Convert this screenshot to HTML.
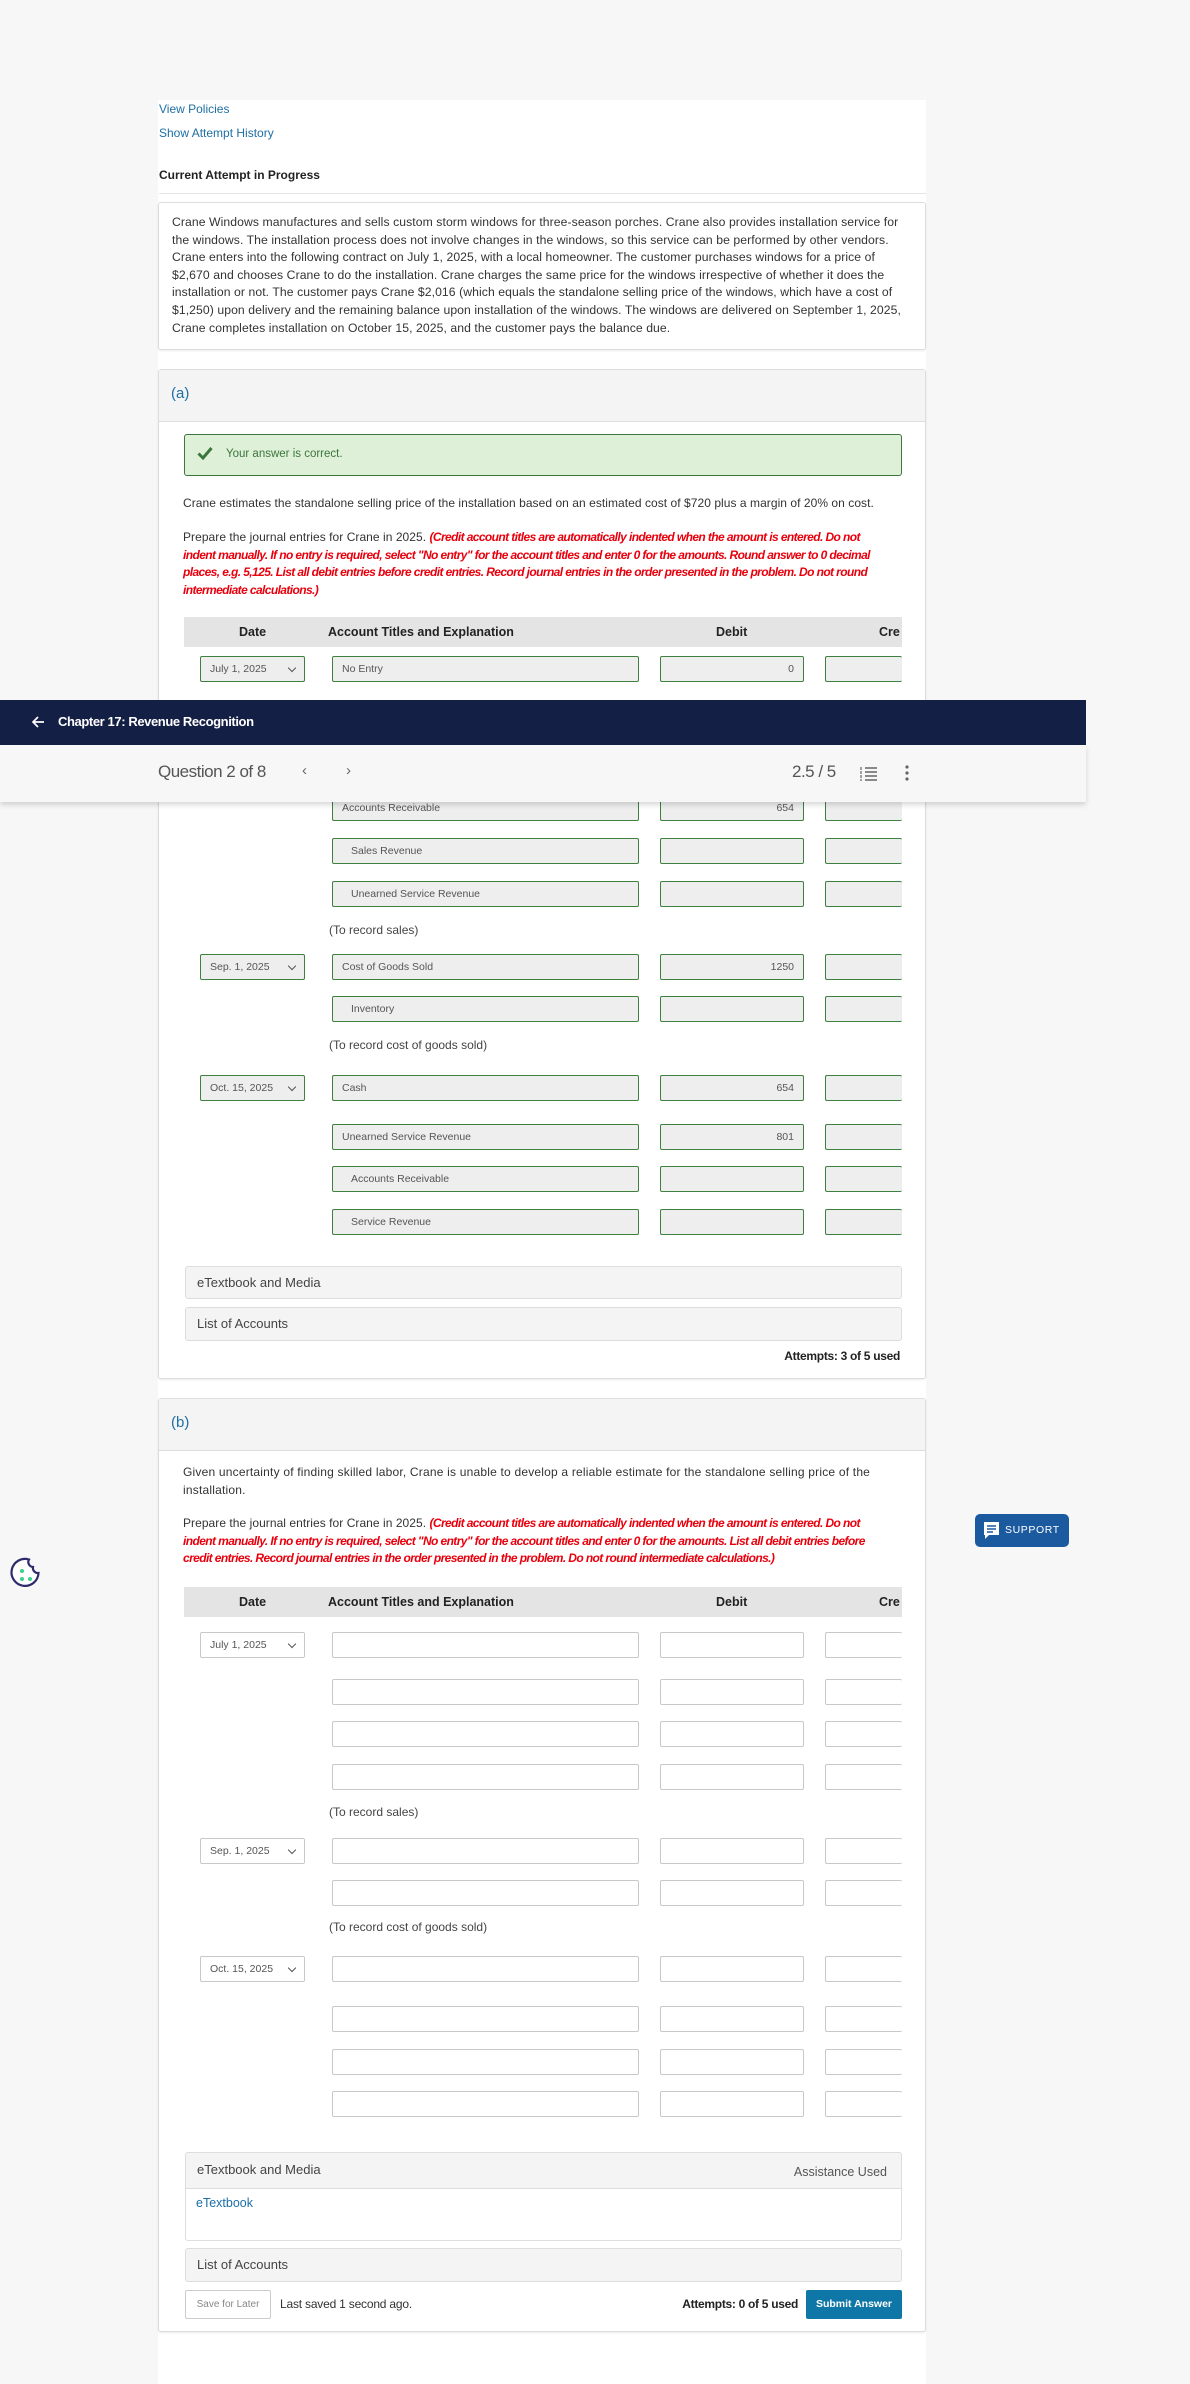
<!DOCTYPE html>
<html><head><meta charset="utf-8">
<style>
*{box-sizing:border-box;margin:0;padding:0}
body{width:1190px;height:2384px;background:#f7f7f7;font-family:"Liberation Sans",sans-serif;color:#333;position:relative;overflow:hidden}
.a{position:absolute}
.col{position:absolute;left:158px;top:100px;width:768px;height:2284px;background:#fff}
.link{color:#1d6fa5;font-size:12px}
.sec{position:absolute;left:158px;width:768px;border:1px solid #ddd;border-radius:3px;background:#fff;box-shadow:0 1px 2px rgba(0,0,0,.08)}
.sech{position:absolute;left:0;right:0;top:0;background:#f4f4f4;border-bottom:1px solid #ddd}
.t{font-size:12px;line-height:17.6px;white-space:nowrap}
.red{color:#e8000d;font-style:italic;font-weight:bold;letter-spacing:-.6px}
.th{position:absolute;left:184px;width:718px;height:30px;background:#e4e4e4;font-weight:bold;font-size:12.5px;color:#222}
.th span{position:absolute;top:8px}
.in{position:absolute;height:26px;font-size:10.5px;color:#555;line-height:24px;padding:0 9px;white-space:nowrap;overflow:hidden}
.g{background:#eeeeee;border:1.5px solid #3f7f3f;border-radius:2px}
.w{background:#fff;border:1px solid #c8c8c8;border-radius:2px}
.sel::after{content:"";position:absolute;right:9px;top:8px;width:5px;height:5px;border-right:1.7px solid #555;border-bottom:1.7px solid #555;transform:rotate(45deg)}
.acc{left:332px;width:307px}.deb{left:660px;width:144px;text-align:right}.cre{left:825px;width:77px;border-right:none}
.dat{left:200px;width:105px}
.note{position:absolute;left:329px;font-size:12px;color:#444}
.box{position:absolute;left:185px;width:717px;background:#f4f4f4;border:1px solid #ddd;border-radius:3px;font-size:13px;color:#444;padding-left:11px}
</style></head><body>
<div class="col"></div>
<div class="a link" style="left:159px;top:102px">View Policies</div>
<div class="a link" style="left:159px;top:126px">Show Attempt History</div>
<div class="a" style="left:159px;top:168px;font-size:12px;font-weight:bold;color:#222">Current Attempt in Progress</div>
<div class="a" style="left:159px;top:193px;width:767px;height:1px;background:#e5e5e5"></div>

<div class="sec" style="top:202px;height:148px"></div>
<div class="a t" style="left:172px;top:214px;font-size:12.2px;letter-spacing:.08px;color:#333">
Crane Windows manufactures and sells custom storm windows for three-season porches. Crane also provides installation service for<br>
the windows. The installation process does not involve changes in the windows, so this service can be performed by other vendors.<br>
Crane enters into the following contract on July 1, 2025, with a local homeowner. The customer purchases windows for a price of<br>
$2,670 and chooses Crane to do the installation. Crane charges the same price for the windows irrespective of whether it does the<br>
installation or not. The customer pays Crane $2,016 (which equals the standalone selling price of the windows, which have a cost of<br>
$1,250) upon delivery and the remaining balance upon installation of the windows. The windows are delivered on September 1, 2025,<br>
Crane completes installation on October 15, 2025, and the customer pays the balance due.</div>

<!-- section a -->
<div class="sec" style="top:369px;height:1010px"><div class="sech" style="height:52px"></div></div>
<div class="a" style="left:171px;top:385px;font-size:15px;color:#1d6fa5">(a)</div>
<div class="a" style="left:184px;top:434px;width:718px;height:42px;background:#dff0d8;border:1.5px solid #3c763d;border-radius:3px"></div>
<svg class="a" style="left:197px;top:446px" width="16" height="14" viewBox="0 0 16 14"><path d="M1.5 7.5l4.5 4.5L14.5 2" stroke="#3c763d" stroke-width="3" fill="none"/></svg>
<div class="a" style="left:226px;top:448px;font-size:11.5px;color:#3c763d">Your answer is correct.</div>
<div class="a t" style="left:183px;top:495px;letter-spacing:.05px">Crane estimates the standalone selling price of the installation based on an estimated cost of $720 plus a margin of 20% on cost.</div>
<div class="a t" style="left:183px;top:529px;letter-spacing:.05px">Prepare the journal entries for Crane in 2025. <span class="red">(Credit account titles are automatically indented when the amount is entered. Do not</span><br>
<span class="red">indent manually. If no entry is required, select "No entry" for the account titles and enter 0 for the amounts. Round answer to 0 decimal</span><br>
<span class="red">places, e.g. 5,125. List all debit entries before credit entries. Record journal entries in the order presented in the problem. Do not round</span><br>
<span class="red">intermediate calculations.)</span></div>
<div class="th" style="top:617px"><span style="left:55px">Date</span><span style="left:144px">Account Titles and Explanation</span><span style="left:532px">Debit</span><span style="left:695px">Cre</span></div>

<div class="in g sel dat" style="top:656px">July 1, 2025</div>
<div class="in g acc" style="top:656px">No Entry</div>
<div class="in g deb" style="top:656px">0</div>
<div class="in g cre" style="top:656px"></div>

<div class="in g acc" style="top:795px">Accounts Receivable</div>
<div class="in g deb" style="top:795px">654</div>
<div class="in g cre" style="top:795px"></div>
<div class="in g acc" style="top:838px;padding-left:18px">Sales Revenue</div>
<div class="in g deb" style="top:838px"></div><div class="in g cre" style="top:838px"></div>
<div class="in g acc" style="top:881px;padding-left:18px">Unearned Service Revenue</div>
<div class="in g deb" style="top:881px"></div><div class="in g cre" style="top:881px"></div>
<div class="note" style="top:923px">(To record sales)</div>

<div class="in g sel dat" style="top:954px">Sep. 1, 2025</div>
<div class="in g acc" style="top:954px">Cost of Goods Sold</div>
<div class="in g deb" style="top:954px">1250</div><div class="in g cre" style="top:954px"></div>
<div class="in g acc" style="top:996px;padding-left:18px">Inventory</div>
<div class="in g deb" style="top:996px"></div><div class="in g cre" style="top:996px"></div>
<div class="note" style="top:1038px">(To record cost of goods sold)</div>

<div class="in g sel dat" style="top:1075px">Oct. 15, 2025</div>
<div class="in g acc" style="top:1075px">Cash</div>
<div class="in g deb" style="top:1075px">654</div><div class="in g cre" style="top:1075px"></div>
<div class="in g acc" style="top:1124px">Unearned Service Revenue</div>
<div class="in g deb" style="top:1124px">801</div><div class="in g cre" style="top:1124px"></div>
<div class="in g acc" style="top:1166px;padding-left:18px">Accounts Receivable</div>
<div class="in g deb" style="top:1166px"></div><div class="in g cre" style="top:1166px"></div>
<div class="in g acc" style="top:1209px;padding-left:18px">Service Revenue</div>
<div class="in g deb" style="top:1209px"></div><div class="in g cre" style="top:1209px"></div>

<div class="box" style="top:1266px;height:33px;line-height:31px">eTextbook and Media</div>
<div class="box" style="top:1307px;height:34px;line-height:32px">List of Accounts</div>
<div class="a" style="left:700px;width:200px;text-align:right;top:1349px;font-size:12px;font-weight:bold;color:#222;letter-spacing:-.3px">Attempts: 3 of 5 used</div>

<!-- section b -->
<div class="sec" style="top:1398px;height:934px"><div class="sech" style="height:52px"></div></div>
<div class="a" style="left:171px;top:1414px;font-size:15px;color:#1d6fa5">(b)</div>
<div class="a t" style="left:183px;top:1464px;letter-spacing:.2px">Given uncertainty of finding skilled labor, Crane is unable to develop a reliable estimate for the standalone selling price of the<br>installation.</div>
<div class="a t" style="left:183px;top:1515px;letter-spacing:.05px">Prepare the journal entries for Crane in 2025. <span class="red">(Credit account titles are automatically indented when the amount is entered. Do not</span><br>
<span class="red">indent manually. If no entry is required, select "No entry" for the account titles and enter 0 for the amounts. List all debit entries before</span><br>
<span class="red">credit entries. Record journal entries in the order presented in the problem. Do not round intermediate calculations.)</span></div>
<div class="th" style="top:1587px"><span style="left:55px">Date</span><span style="left:144px">Account Titles and Explanation</span><span style="left:532px">Debit</span><span style="left:695px">Cre</span></div>

<div class="in w sel dat" style="top:1632px">July 1, 2025</div>
<div class="in w acc" style="top:1632px"></div><div class="in w deb" style="top:1632px"></div><div class="in w cre" style="top:1632px"></div>
<div class="in w acc" style="top:1679px"></div><div class="in w deb" style="top:1679px"></div><div class="in w cre" style="top:1679px"></div>
<div class="in w acc" style="top:1721px"></div><div class="in w deb" style="top:1721px"></div><div class="in w cre" style="top:1721px"></div>
<div class="in w acc" style="top:1764px"></div><div class="in w deb" style="top:1764px"></div><div class="in w cre" style="top:1764px"></div>
<div class="note" style="top:1805px">(To record sales)</div>
<div class="in w sel dat" style="top:1838px">Sep. 1, 2025</div>
<div class="in w acc" style="top:1838px"></div><div class="in w deb" style="top:1838px"></div><div class="in w cre" style="top:1838px"></div>
<div class="in w acc" style="top:1880px"></div><div class="in w deb" style="top:1880px"></div><div class="in w cre" style="top:1880px"></div>
<div class="note" style="top:1920px">(To record cost of goods sold)</div>
<div class="in w sel dat" style="top:1956px">Oct. 15, 2025</div>
<div class="in w acc" style="top:1956px"></div><div class="in w deb" style="top:1956px"></div><div class="in w cre" style="top:1956px"></div>
<div class="in w acc" style="top:2006px"></div><div class="in w deb" style="top:2006px"></div><div class="in w cre" style="top:2006px"></div>
<div class="in w acc" style="top:2049px"></div><div class="in w deb" style="top:2049px"></div><div class="in w cre" style="top:2049px"></div>
<div class="in w acc" style="top:2091px"></div><div class="in w deb" style="top:2091px"></div><div class="in w cre" style="top:2091px"></div>

<div class="box" style="top:2152px;height:89px;background:#fff"></div>
<div class="box" style="top:2152px;height:37px;line-height:34px;border-bottom-left-radius:0;border-bottom-right-radius:0">eTextbook and Media<span style="position:absolute;right:14px;top:2px;color:#555;font-size:12.5px">Assistance Used</span></div>
<div class="a link" style="left:196px;top:2196px;font-size:12.5px">eTextbook</div>
<div class="box" style="top:2248px;height:34px;line-height:32px">List of Accounts</div>
<div class="a" style="left:185px;top:2290px;width:86px;height:29px;border:1px solid #ccc;border-radius:2px;font-size:10px;color:#888;text-align:center;line-height:27px">Save for Later</div>
<div class="a" style="left:280px;top:2297px;font-size:12px;color:#333;letter-spacing:-.2px">Last saved 1 second ago.</div>
<div class="a" style="left:640px;width:158px;text-align:right;top:2297px;font-size:12px;font-weight:bold;color:#222;letter-spacing:-.3px">Attempts: 0 of 5 used</div>
<div class="a" style="left:806px;top:2290px;width:96px;height:29px;background:#0f77a8;border-radius:2px;color:#fff;font-size:10.5px;font-weight:bold;text-align:center;line-height:29px">Submit Answer</div>

<!-- nav bar -->
<div class="a" style="left:0;top:700px;width:1086px;height:45px;background:#141f45"></div>
<svg class="a" style="left:31px;top:715px" width="14" height="14" viewBox="0 0 14 14"><path d="M13 7H2M7 2L2 7l5 5" stroke="#fff" stroke-width="1.7" fill="none"/></svg>
<div class="a" style="left:58px;top:714px;font-size:13px;font-weight:bold;color:#fff;letter-spacing:-.4px">Chapter 17: Revenue Recognition</div>
<div class="a" style="left:0;top:745px;width:1086px;height:57px;background:#f7f7f7;box-shadow:0 3px 5px rgba(0,0,0,.15)"></div>
<div class="a" style="left:158px;top:762px;font-size:17px;color:#555;letter-spacing:-.5px">Question 2 of 8</div>
<div class="a" style="left:302px;top:762px;font-size:15px;color:#666">&#8249;</div>
<div class="a" style="left:346px;top:762px;font-size:15px;color:#666">&#8250;</div>
<div class="a" style="left:792px;top:762px;font-size:17px;color:#555;letter-spacing:-.5px">2.5 / 5</div>
<svg class="a" style="left:860px;top:766px" width="17" height="15" viewBox="0 0 17 15"><g stroke="#666" stroke-width="1.4"><path d="M5 2h12M5 6h12M5 10h12M5 14h12"/><path d="M1 1v3M1 5v3M1 9v3M1 13v2" stroke-width="1.2"/></g></svg>
<svg class="a" style="left:904px;top:764px" width="6" height="18" viewBox="0 0 6 18"><circle cx="3" cy="3" r="1.6" fill="#666"/><circle cx="3" cy="9" r="1.6" fill="#666"/><circle cx="3" cy="15" r="1.6" fill="#666"/></svg>

<!-- support -->
<div class="a" style="left:975px;top:1514px;width:94px;height:33px;background:#1c5aa0;border-radius:5px"></div>
<svg class="a" style="left:983px;top:1521px" width="17" height="19" viewBox="0 0 17 19"><path d="M1 1h15v13H6l-4 4v-4H1z" fill="#fff"/><path d="M4 5h9M4 8h9M4 11h6" stroke="#1c5aa0" stroke-width="1.5"/></svg>
<div class="a" style="left:1005px;top:1524px;font-size:10.5px;color:#fff;letter-spacing:.6px">SUPPORT</div>

<!-- cookie -->
<svg class="a" style="left:8px;top:1555px" width="34" height="34" viewBox="0 0 34 34"><path d="M21 4.5A13.5 13.5 0 1 0 30.5 18 5 5 0 0 1 25 12 5 5 0 0 1 21 4.5z" fill="#fff" stroke="#2d2b6b" stroke-width="2.2"/><circle cx="14" cy="16" r="2" fill="#3fd08a"/><circle cx="14" cy="24" r="2" fill="#3fd08a"/><circle cx="22" cy="24" r="2" fill="#3fd08a"/></svg>
</body></html>
